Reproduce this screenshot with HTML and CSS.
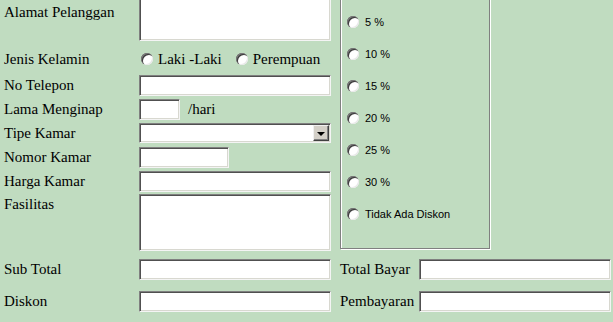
FILE: index.html
```html
<!DOCTYPE html>
<html lang="id">
<head>
    <meta charset="UTF-8">
    <meta name="viewport" content="width=device-width, initial-scale=1.0">
    <title>Data Pelanggan Hotel</title>
    <link rel="stylesheet" href="styles.css">
</head>
<body>
    <form class="page">
        <div class="top">
            <!-- Data pelanggan dan kamar -->
            <div class="data">
                <div class="row row-alamat">
                    <span class="lbl">Alamat Pelanggan</span>
                    <textarea class="field area area-alamat"></textarea>
                </div>
                <div class="row row-gender">
                    <span class="lbl">Jenis Kelamin</span>
                    <label class="opt"><input type="radio" name="jk" class="radio">Laki -Laki</label>
                    <label class="opt opt-p"><input type="radio" name="jk" class="radio">Perempuan</label>
                </div>
                <div class="row">
                    <span class="lbl">No Telepon</span>
                    <input type="text" class="field">
                </div>
                <div class="row">
                    <span class="lbl">Lama Menginap</span>
                    <input type="text" class="field field-xs">
                    <span class="unit">/hari</span>
                </div>
                <div class="row">
                    <span class="lbl">Tipe Kamar</span>
                    <div class="select">
                        <span class="select-btn"><span class="arrow"></span></span>
                    </div>
                </div>
                <div class="row">
                    <span class="lbl">Nomor Kamar</span>
                    <input type="text" class="field field-s">
                </div>
                <div class="row">
                    <span class="lbl">Harga Kamar</span>
                    <input type="text" class="field">
                </div>
                <div class="row row-fasilitas">
                    <span class="lbl">Fasilitas</span>
                    <textarea class="field area area-fasilitas"></textarea>
                </div>
            </div>

            <!-- Pilihan diskon -->
            <fieldset class="diskon">
                <label class="d-opt"><input type="radio" name="diskon" class="radio">5 %</label>
                <label class="d-opt"><input type="radio" name="diskon" class="radio">10 %</label>
                <label class="d-opt"><input type="radio" name="diskon" class="radio">15 %</label>
                <label class="d-opt"><input type="radio" name="diskon" class="radio">20 %</label>
                <label class="d-opt"><input type="radio" name="diskon" class="radio">25 %</label>
                <label class="d-opt"><input type="radio" name="diskon" class="radio">30 %</label>
                <label class="d-opt"><input type="radio" name="diskon" class="radio">Tidak Ada Diskon</label>
            </fieldset>
        </div>

        <!-- Total -->
        <div class="totals">
            <div class="row row-total">
                <span class="lbl">Sub Total</span>
                <input type="text" class="field">
                <span class="lbl2">Total Bayar</span>
                <input type="text" class="field">
            </div>
            <div class="row row-total">
                <span class="lbl">Diskon</span>
                <input type="text" class="field">
                <span class="lbl2">Pembayaran</span>
                <input type="text" class="field">
            </div>
        </div>
    </form>
</body>
</html>
```

FILE: styles.css
```css
body {
    margin: 0;
    background-color: #c0dcc0;
    font-family: "Liberation Serif", "Times New Roman", serif;
    font-size: 15px;
    color: #000;
    overflow: hidden;
}
.page {
    margin-top: -4px;
    padding-left: 4px;
}
.top {
    display: flex;
    align-items: flex-start;
}
.data {
    width: 336px;
}
.row {
    display: flex;
    align-items: center;
    height: 24px;
    line-height: 18px;
}
.lbl {
    width: 135px;
    flex: none;
}
.field {
    appearance: none;
    box-sizing: border-box;
    width: 192px;
    height: 21px;
    margin: 0;
    padding: 1px 3px;
    background: #fff;
    border: 1px solid;
    border-color: #808080 #f4f4f4 #f4f4f4 #808080;
    box-shadow: inset 1px 1px 0 #505050, inset -1px -1px 0 #d8d8d0;
    font: inherit;
    outline: none;
}
.field-xs {
    width: 41px;
}
.field-s {
    width: 90px;
}
.unit {
    margin-left: 8px;
}
.area {
    resize: none;
    overflow: hidden;
}
.row-alamat {
    height: 45px;
    align-items: flex-start;
}
.row-alamat .lbl {
    padding-top: 7px;
}
.area-alamat {
    height: 45px;
}
.row-gender {
    margin-top: 4px;
    height: 28px;
}
.row-fasilitas {
    height: auto;
    align-items: flex-start;
}
.row-fasilitas .lbl {
    padding-top: 2px;
}
.area-fasilitas {
    height: 57px;
    margin-top: 1px;
}

/* tombol radio gaya windows klasik */
.radio {
    appearance: none;
    width: 12px;
    height: 12px;
    margin: 0;
    flex: none;
    border-radius: 50%;
    background: #fff;
    box-shadow: inset 1px 1px 0 #7a7a7a, inset 2px 2px 0 #3c3c3c, inset -1px -1px 0 #e8e8e8;
}
.opt {
    display: flex;
    align-items: center;
}
.opt .radio {
    margin-left: 2px;
    margin-right: 5px;
}
.opt-p {
    margin-left: 12px;
}

.select {
    box-sizing: border-box;
    width: 192px;
    height: 20px;
    display: flex;
    justify-content: flex-end;
    align-items: center;
    padding-right: 1px;
    background: #fff;
    border: 1px solid;
    border-color: #808080 #f4f4f4 #f4f4f4 #808080;
    box-shadow: inset 1px 1px 0 #505050, inset -1px -1px 0 #d8d8d0;
}
.select-btn {
    box-sizing: border-box;
    width: 16px;
    height: 16px;
    display: flex;
    justify-content: center;
    align-items: center;
    background: #d4d0c8;
    border: 1px solid;
    border-color: #f0f0f0 #404040 #404040 #f0f0f0;
    box-shadow: inset -1px -1px 0 #808080;
}
.arrow {
    width: 0;
    height: 0;
    border-left: 4px solid transparent;
    border-right: 4px solid transparent;
    border-top: 4px solid #000;
    margin-top: 1px;
}

.diskon {
    box-sizing: border-box;
    width: 150px;
    height: 259px;
    margin: -6px 0 0 0;
    padding: 15px 6px 0;
    border: 1px solid #808080;
    box-shadow: inset 1px 1px 0 #fff, 1px 1px 0 #fff;
    min-inline-size: 0;
}
.d-opt {
    display: flex;
    align-items: center;
    height: 32px;
    font-family: "Liberation Sans", Arial, sans-serif;
    font-size: 11px;
}
.d-opt .radio {
    margin-right: 6px;
}

.totals {
    margin-top: 2px;
}
.row-total {
    height: 32px;
}
.lbl2 {
    width: 79px;
    margin-left: 9px;
    flex: none;
}
```
